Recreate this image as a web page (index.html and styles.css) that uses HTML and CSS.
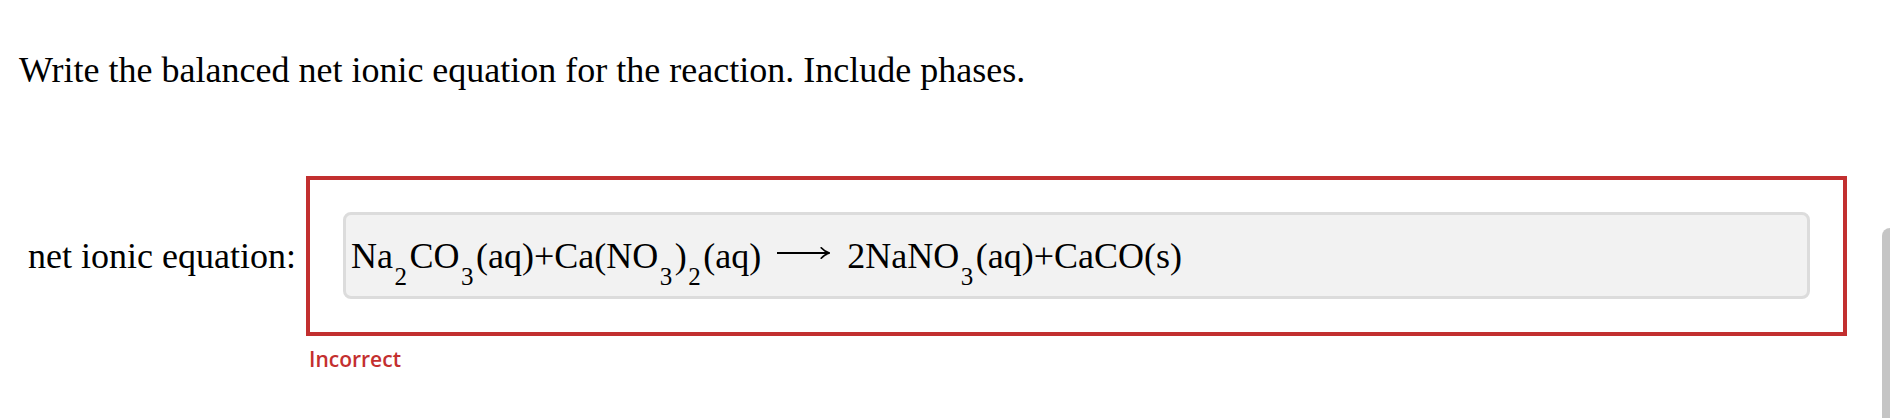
FILE: index.html
```html
<!DOCTYPE html>
<html lang="en">
<head>
<meta charset="utf-8">
<title>Net ionic equation</title>
<link rel="stylesheet" href="styles.css">
</head>
<body>
<main class="page">
  <p class="prompt">Write the balanced net ionic equation for the reaction. Include phases.</p>
  <div class="answer-row">
    <div class="label">net ionic equation:</div>
    <div class="answer-col">
      <div class="answer-box">
        <div class="eq-field">
          <span class="eq">Na<sub>2</sub>CO<sub>3</sub>(aq)+Ca(NO<sub>3</sub>)<sub>2</sub>(aq)<svg class="arrow" viewBox="0 0 53 12" width="53" height="12" aria-hidden="true"><path d="M0 6 H51" stroke="#000" stroke-width="2" fill="none"/><path d="M44.2 0.8 Q47.4 4.5 52.4 6 Q47.4 7.5 44.2 11.2" stroke="#000" stroke-width="1.7" fill="none" stroke-linecap="round"/></svg>2NaNO<sub>3</sub>(aq)+CaCO(s)</span>
        </div>
      </div>
      <div class="feedback">Incorrect</div>
    </div>
  </div>
</main>
<div class="scroll-thumb"></div>
</body>
</html>
```

FILE: styles.css
```css
html, body {
  margin: 0;
  padding: 0;
  background: #ffffff;
}

body {
  width: 1890px;
  height: 418px;
  overflow: hidden;
  position: relative;
  font-family: "Liberation Serif", "Times New Roman", serif;
  color: #000000;
}

.page {
  display: flex;
  flex-direction: column;
}

.prompt {
  margin: 49px 0 0 0;
  padding-left: 19px;
  font-size: 36px;
  line-height: 42px;
}

.answer-row {
  display: flex;
  margin-top: 85px;
  padding-right: 43px;
}

.label {
  width: 306px;
  box-sizing: border-box;
  padding-right: 10px;
  text-align: right;
  font-size: 36px;
  line-height: 42px;
  height: 160px;
  display: flex;
  align-items: center;
  justify-content: flex-end;
}

.answer-col {
  flex: 1;
  display: flex;
  flex-direction: column;
}

.answer-box {
  box-sizing: border-box;
  height: 160px;
  border: 4px solid #c22f2f;
  padding: 32px 33px 32px 33px;
}

.eq-field {
  box-sizing: border-box;
  height: 87px;
  border: 3px solid #dcdcdc;
  border-radius: 8px;
  background: #f2f2f2;
  padding-left: 5px;
  display: flex;
  align-items: center;
}

.eq {
  font-size: 36px;
  line-height: 42px;
  white-space: nowrap;
}

.eq sub {
  font-family: "Liberation Serif", "Times New Roman", serif;
  font-size: 25px;
  line-height: 0;
  vertical-align: -17px;
  margin: 0 2.5px 0 1.5px;
}

.arrow {
  vertical-align: 9px;
  margin: 0 17px 0 16px;
}

.feedback {
  margin-top: 10px;
  padding-left: 3px;
  font-family: "Open Sans", "Liberation Sans", sans-serif;
  font-weight: 600;
  font-size: 21px;
  line-height: 27px;
  color: #c42f2f;
}

.scroll-thumb {
  position: absolute;
  right: 0;
  top: 228px;
  bottom: 0;
  width: 8px;
  background: #c5c5c5;
  border-top-left-radius: 8px;
}
```
